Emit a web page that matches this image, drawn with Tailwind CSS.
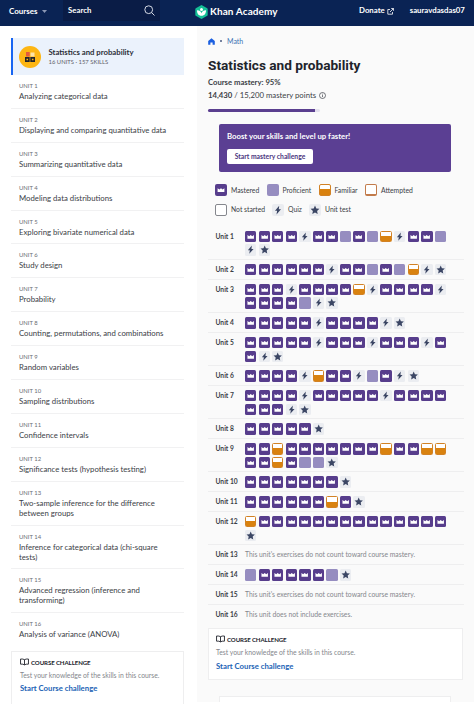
<!DOCTYPE html>
<html lang="en">
<head>
    <meta charset="UTF-8">
    <meta name="viewport" content="width=device-width, initial-scale=1.0">
    <title>Statistics and probability | Khan Academy</title>
    <script src="https://cdn.jsdelivr.net/npm/@tailwindcss/browser@4"></script>
</head>
<body class="bg-white font-['Lato','Open_Sans',sans-serif] text-[#21242c] w-[474px] h-[704px] overflow-hidden">

    <!-- shared icons -->
    <svg class="hidden">
        <symbol id="crown" viewBox="0 0 12 12"><path fill="#fff" d="M2.600 4.200l1.800 1.400L6 4.300l1.600 1.300 1.800-1.400v3.900H2.600z"/></symbol>
        <symbol id="bolt" viewBox="0 0 12 12"><path fill="#3b4664" d="M7.200 1.700L3 6.700h2.100l-.6 3.700 4.500-5.200H6.800z"/></symbol>
        <symbol id="star" viewBox="0 0 12 12"><path fill="#3b4664" d="M6 1.600l1.300 2.800 3.100.4-2.300 2.100.6 3.100L6 8.500 3.300 10l.6-3.100-2.300-2.100 3.100-.4z"/></symbol>
        <symbol id="book" viewBox="0 0 10 8"><path fill="none" stroke="#21242c" stroke-width="1" d="M5 1.400C4 .7 2.500.6.6.7v5.700C2.500 6.200 4 6.400 5 7.200 6 6.400 7.500 6.200 9.400 6.400V.7C7.500.6 6 .7 5 1.400zM5 1.400v5.800"/></symbol>
    </svg>

    <header class="flex items-center h-[26px] bg-[#0a2354] text-white text-[7.800px] font-bold">
        <div class="flex items-center w-[63px] pl-[9px] pb-[4px]">
            <span class="text-[8px]">Courses</span>
            <svg class="w-[5px] h-[3px] ml-[4px] mt-px" viewBox="0 0 5 3"><path fill="#8b98b5" d="M0 0h5L2.500 3z"/></svg>
        </div>
        <div class="flex items-center justify-between w-[97px] h-[21px] -mt-[5px] pl-[5px] pr-[5px] bg-[#0a1c46]">
            <span>Search</span>
            <svg class="w-[11px] h-[11px]" viewBox="0 0 11 11" fill="none" stroke="#d5d9e4" stroke-width="1"><circle cx="4.700" cy="4.700" r="3.900"/><path d="M7.500 7.500l3 3"/></svg>
        </div>
        <div class="flex items-center ml-[35px] w-[164px] pb-[3px]">
            <svg class="w-[13px] h-[14px]" viewBox="0 0 13 14">
                <path fill="#14bf96" d="M6.500 0l5.700 3.200q.5.300.5.900v5.800q0 .6-.5.900L6.500 14 .8 10.800q-.5-.3-.5-.9V4.100q0-.6.5-.9z"/>
                <circle cx="6.500" cy="4.500" r="1.500" fill="#fff"/>
                <path fill="#fff" d="M2 5.200c2.500 0 4 1 4.500 3 .5-2 2-3 4.500-3 0 3.300-1.500 5.500-4.500 5.500S2 8.500 2 5.200z"/>
            </svg>
            <span class="ml-[2px] text-[10px] tracking-[0.1px] whitespace-nowrap">Khan Academy</span>
        </div>
        <div class="flex items-center pb-[4px]">
            <span>Donate</span>
            <svg class="w-[7px] h-[7px] ml-[2px]" viewBox="0 0 7 7" fill="none" stroke="#fff" stroke-width=".8"><path d="M3 1.500H.8v4.700h4.700V4M4.200.5h2.300v2.300M6.400.6L3 4"/></svg>
            <span class="ml-[16px]">sauravdasdas07</span>
        </div>
    </header>

    <div class="flex h-[676px]">
        <aside class="w-[197px] pl-[11px] pt-[12px]">
            <div class="flex items-center w-[173px] h-[37px] bg-[#ebf2fc] border-l-2 border-[#1865f2]">
                <div class="flex items-center justify-center w-[22px] h-[22px] ml-[6px] rounded-full bg-[#fdb614]">
                    <svg class="w-[10px] h-[10px]" viewBox="0 0 10 10">
                        <path fill="#e35b3c" d="M1 0h3.700v4.500H1z"/><path fill="#fde3a8" d="M5.500.5H9.500v4H5.500z"/>
                        <path fill="#21242c" d="M0 5h4.700v5H0zM5.300 5H10v5H5.300z"/>
                        <path fill="#fdb614" d="M1.500 6.700h1.600v1.600H1.500zM6.900 6.700h1.600v1.600H6.900z"/>
                    </svg>
                </div>
                <div class="ml-[7.500px]">
                    <div class="text-[7.750px] leading-[10px] font-bold text-[#2c2f38]">Statistics and probability</div>
                    <div class="text-[5.900px] leading-[9px] text-[#5f6169]">16 UNITS · 157 SKILLS</div>
                </div>
            </div>
            <nav id="units" class="w-[173px]"></nav>
            <div class="w-[173px] h-[60px] mt-[4.500px] pl-[8px] pt-[6px] border border-b-0 border-[#eeeeef]">
                <div class="flex items-center text-[6.100px] leading-[9px] font-bold tracking-[-0.1px]"><svg class="w-[9px] h-[8px] mr-[2px]"><use href="#book"/></svg>COURSE CHALLENGE</div>
                <div class="mt-[3px] text-[6.800px] leading-[10px] text-[#85878d]">Test your knowledge of the skills in this course.</div>
                <div class="mt-[3.500px] text-[7.750px] leading-[10px] font-bold text-[#1b62b5]">Start Course challenge</div>
            </div>
        </aside>

        <main class="w-[277px] pl-[11px] bg-[#fafafa] overflow-hidden">
            <div class="flex items-center h-[10px] mt-[10px] text-[7px] text-[#3d72b4]">
                <svg class="w-[7px] h-[7px]" viewBox="0 0 7 7"><path fill="#1b5fe0" d="M3.500.2L6.800 3v3.800H4.600V4.500H2.400v2.300H.2V3z"/></svg>
                <span class="w-[2px] h-[2px] mx-[5px] rounded-full bg-[#4a5a80]"></span>
                <span>Math</span>
            </div>
            <h1 class="mt-[10px] font-['Roboto',sans-serif] font-bold text-[13.650px] leading-[18px] whitespace-nowrap">Statistics and probability</h1>
            <div class="mt-[3px] text-[7.700px] leading-[10px] font-bold text-[#3b3e46]">Course mastery: 95%</div>
            <div class="flex items-center mt-[3px] text-[7.750px] leading-[11px] text-[#3b3e46]">
                <span><b>14,430</b> / 15,200 mastery points</span>
                <svg class="w-[7px] h-[7px] ml-[3px]" viewBox="0 0 7 7" fill="none" stroke="#3b3e46" stroke-width=".7"><circle cx="3.500" cy="3.500" r="3"/><path d="M3.500 3.100v2M3.500 1.700v.8"/></svg>
            </div>
            <div class="w-[112px] h-[3px] mt-[8px] rounded-full bg-[#e4e0ee]"><div class="w-[107px] h-[3px] rounded-l-full bg-[#5a3f8f]"></div></div>

            <div class="w-[232px] h-[48px] ml-[11px] mt-[12px] pl-[8px] pt-[7px] rounded-[2px] bg-[#5b3f93]">
                <div class="text-[7.750px] leading-[10px] font-bold text-white">Boost your skills and level up faster!</div>
                <div class="flex items-center justify-center w-[86px] h-[15px] mt-[8px] rounded-[2px] bg-white text-[6.800px] font-bold text-[#4b3680]">Start mastery challenge</div>
            </div>

            <div class="flex items-center h-[12px] mt-[12px] ml-[7px] text-[6.800px] text-[#3b3e46]">
                <span class="flex items-center w-[52px]"><svg class="w-[12px] h-[12px] mr-[4px] rounded-[2px] bg-[#573d8c]"><use href="#crown"/></svg>Mastered</span>
                <span class="flex items-center w-[51.500px]"><i class="w-[11.500px] h-[11.500px] mr-[4px] rounded-[2px] bg-[#968dc0]"></i>Proficient</span>
                <span class="flex items-center w-[46.500px]"><i class="w-[12px] h-[12px] mr-[4px] rounded-[2px] border border-[#d28225] bg-linear-to-b from-white from-45% to-[#d9820f] to-45%"></i>Familiar</span>
                <span class="flex items-center"><i class="w-[12px] h-[12px] mr-[4px] rounded-[2px] border border-b-2 border-[#c27b4b] bg-white"></i>Attempted</span>
            </div>
            <div class="flex items-center h-[12px] mt-[7.500px] ml-[7px] text-[6.800px] text-[#3b3e46]">
                <span class="flex items-center w-[57px]"><i class="w-[12px] h-[12px] mr-[4px] rounded-[2px] border border-[#85878d] bg-white"></i>Not started</span>
                <span class="flex items-center w-[37px]"><svg class="w-[12px] h-[12px] mr-[4px] rounded-[2px] bg-[#ebedf1]"><use href="#bolt"/></svg>Quiz</span>
                <span class="flex items-center"><svg class="w-[12px] h-[12px] mr-[4px] rounded-[2px] bg-[#ebedf1]"><use href="#star"/></svg>Unit test</span>
            </div>

            <div id="mastery" class="w-[256px] mt-[11.100px]"></div>

            <div class="w-[255px] h-[52px] mt-[4.500px] pl-[7px] pt-[6px] border border-[#eeeeef] bg-white">
                <div class="flex items-center text-[6.100px] leading-[9px] font-bold tracking-[-0.1px]"><svg class="w-[9px] h-[8px] mr-[2px]"><use href="#book"/></svg>COURSE CHALLENGE</div>
                <div class="mt-[3px] text-[6.800px] leading-[10px] text-[#85878d]">Test your knowledge of the skills in this course.</div>
                <div class="mt-[4px] text-[7.750px] leading-[10px] font-bold text-[#1b62b5]">Start Course challenge</div>
            </div>
            <div class="w-[232px] h-[20px] ml-[11px] mt-[16px] border border-[#eeeeef] bg-white"></div>
        </main>
    </div>

    <script>
        const units = [
            'Analyzing categorical data',
            'Displaying and comparing quantitative data',
            'Summarizing quantitative data',
            'Modeling data distributions',
            'Exploring bivariate numerical data',
            'Study design',
            'Probability',
            'Counting, permutations, and combinations',
            'Random variables',
            'Sampling distributions',
            'Confidence intervals',
            'Significance tests (hypothesis testing)',
            'Two-sample inference for the difference<br>between groups',
            'Inference for categorical data (chi-square<br>tests)',
            'Advanced regression (inference and<br>transforming)',
            'Analysis of variance (ANOVA)'
        ];

        // m = mastered, p = proficient, f = familiar, q = quiz, t = unit test
        const noCount = "This unit's exercises do not count toward course mastery.";
        const progress = [
            'mmmmqmmpmpfqmmpqt',
            'mmmmmmqmmpmpfqt',
            'mmmqmmmmfqmmmmqmmmmpqt',
            'mmmmmqmmmmqt',
            'mmmmmqmmmqmmmqmmqt',
            'mmmmqfmmqpmqt',
            'mmmmqmmmmmqmmmmmmmqt',
            'mmmmmt',
            'mmfmmmmmmmfmmffmmfmppt',
            'mmmmmmmt',
            'mmmmmmfmt',
            'fmmmmmmmmmmmmmmt',
            noCount,
            'pmmmmmpt',
            noCount,
            'This unit does not include exercises.'
        ];

        const tiles = {
            m: '<svg class="w-[11.400px] h-[11.400px] rounded-[1.500px] bg-[#573d8c]" viewBox="0 0 12 12"><use href="#crown"/></svg>',
            p: '<i class="w-[11.400px] h-[11.400px] rounded-[1.500px] bg-[#968dc0]"></i>',
            f: '<i class="w-[11.400px] h-[11.400px] rounded-[1.500px] border border-[#d28225] bg-linear-to-b from-white from-45% to-[#d9820f] to-45%"></i>',
            q: '<svg class="w-[11.400px] h-[11.400px] rounded-[1.500px] bg-[#ebedf1]" viewBox="0 0 12 12"><use href="#bolt"/></svg>',
            t: '<svg class="w-[11.400px] h-[11.400px] rounded-[1.500px] bg-[#ebedf1]" viewBox="0 0 12 12"><use href="#star"/></svg>'
        };

        document.getElementById('units').innerHTML = units.map((name, i) => `
            <div class="pl-[8px] pt-[6px] pb-[6.900px] border-b border-[#f1f1f2] last:border-0">
                <div class="text-[5.900px] leading-[10px] text-[#6b6d74]">UNIT ${i + 1}</div>
                <div class="text-[7.780px] leading-[10px] text-[#3b3e46] whitespace-nowrap">${name}</div>
            </div>`).join('');

        document.getElementById('mastery').innerHTML = progress.map((row, i) => `
            <div class="flex pl-[7.500px] pt-[4.200px] pb-[3.200px] border-b border-[#eeeeef] last:border-0">
                <div class="w-[29.500px] text-[6.700px] leading-[11.400px] font-bold text-[#3b3e46]">Unit ${i + 1}</div>
                ${row.includes(' ')
                    ? `<div class="text-[6.800px] leading-[11.400px] text-[#85878d] whitespace-nowrap">${row}</div>`
                    : `<div class="flex flex-wrap w-[204px] gap-[2.170px]">${[...row].map(c => tiles[c]).join('')}</div>`}
            </div>`).join('');
    </script>
</body>
</html>
